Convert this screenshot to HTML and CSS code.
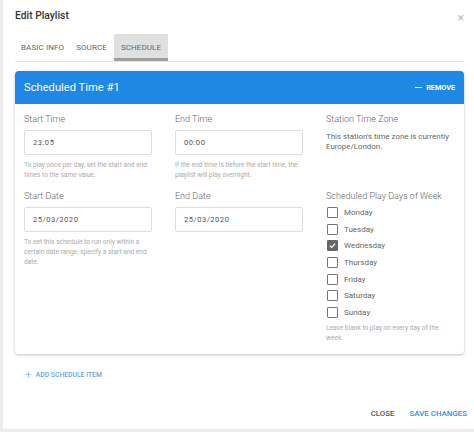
FILE: index.html
```html
<!DOCTYPE html>
<html lang="en">
<head>
    <meta charset="UTF-8">
    <meta name="viewport" content="width=device-width, initial-scale=1.0">
    <title>Edit Playlist</title>
    <link rel="stylesheet" href="styles.css">
</head>
<body>

<div class="dialog">
    <div class="dialog-head">
        <h1>Edit Playlist</h1>
        <button class="close-x" type="button">&times;</button>
    </div>

    <nav class="tabs">
        <a class="tab">BASIC INFO</a>
        <a class="tab">SOURCE</a>
        <a class="tab active">SCHEDULE</a>
    </nav>

    <section class="card">
        <div class="card-head">
            <h2>Scheduled Time #1</h2>
            <button class="remove-btn" type="button"><span class="dash"></span>REMOVE</button>
        </div>

        <div class="card-body">
            <div class="field">
                <label for="start_time">Start Time</label>
                <input type="text" id="start_time" value="23:05">
                <p class="help">To play once per day, set the start and end times to the same value.</p>
            </div>

            <div class="field">
                <label for="end_time">End Time</label>
                <input type="text" id="end_time" value="00:00">
                <p class="help">If the end time is before the start time, the playlist will play overnight.</p>
            </div>

            <div class="field">
                <label>Station Time Zone</label>
                <p class="info">This station's time zone is currently Europe/London.</p>
            </div>

            <div class="field">
                <label for="start_date">Start Date</label>
                <input type="text" id="start_date" value="25/03/2020">
                <p class="help">To set this schedule to run only within a certain date range, specify a start and end date.</p>
            </div>

            <div class="field">
                <label for="end_date">End Date</label>
                <input type="text" id="end_date" value="25/03/2020">
            </div>

            <div class="field">
                <label>Scheduled Play Days of Week</label>
                <ul class="days">
                    <li><span class="box"></span>Monday</li>
                    <li><span class="box"></span>Tuesday</li>
                    <li><span class="box checked"><svg viewBox="0 0 10 10"><path d="M2 5.2 L4.1 7.2 L8 2.9" fill="none" stroke="#fff" stroke-width="1.3"/></svg></span>Wednesday</li>
                    <li><span class="box"></span>Thursday</li>
                    <li><span class="box"></span>Friday</li>
                    <li><span class="box"></span>Saturday</li>
                    <li><span class="box"></span>Sunday</li>
                </ul>
                <p class="help">Leave blank to play on every day of the week.</p>
            </div>
        </div>
    </section>

    <button class="add-btn" type="button"><span class="plus">+</span>ADD SCHEDULE ITEM</button>

    <div class="dialog-foot">
        <button class="text-btn" type="button">CLOSE</button>
        <button class="text-btn primary" type="button">SAVE CHANGES</button>
    </div>
</div>

</body>
</html>
```

FILE: styles.css
```css
body {
    font-family: Roboto, "Liberation Sans", sans-serif;
    background-color: #ececec;
    color: #333;
    margin: 0;
    padding: 0;
}

button {
    font-family: inherit;
    background: none;
    border: none;
    padding: 0;
    cursor: pointer;
}

.dialog {
    background-color: white;
    margin-left: 3px;
    width: 471px;
    height: 429px;
    position: relative;
}

.dialog-head {
    display: flex;
    justify-content: space-between;
    align-items: center;
    padding: 7px 10px 0 12px;
    height: 17px;
}

.dialog-head h1 {
    font-size: 10.3px;
    font-weight: 500;
    margin: 0;
    color: #333;
}

.close-x {
    color: #bbb;
    font-size: 12px;
    line-height: 12px;
    margin-top: 4px;
}

.tabs {
    display: flex;
    margin: 10px 10px 0 12px;
    border-bottom: 1px solid #e6e6e6;
    height: 27px;
}

.tab {
    display: flex;
    align-items: center;
    padding: 0 6px;
    font-size: 8px;
    color: #666;
    letter-spacing: 0.1px;
    box-sizing: border-box;
    height: 27px;
}

.tab.active {
    background-color: #e0e0e0;
    border-bottom: 3px solid #9e9e9e;
    padding: 3px 7px 0;
    margin-left: 1px;
}

.card {
    margin: 9px 10px 0 12px;
    border-radius: 4px;
    box-shadow: 0 1px 3px rgba(0, 0, 0, 0.25);
    overflow: hidden;
}

.card-head {
    background-color: #1f88e5;
    height: 33px;
    display: flex;
    align-items: center;
    justify-content: space-between;
    padding: 0 9px;
}

.card-head h2 {
    margin: 0;
    font-size: 11.2px;
    font-weight: 400;
    color: white;
}

.remove-btn {
    color: white;
    font-size: 7.4px;
    font-weight: 700;
    display: flex;
    align-items: center;
    letter-spacing: -0.1px;
}

.dash {
    display: inline-block;
    width: 7px;
    height: 1.5px;
    background-color: white;
    margin-right: 4px;
}

.card-body {
    display: grid;
    grid-template-columns: 128px 128px 128px;
    column-gap: 23px;
    row-gap: 9px;
    align-items: start;
    padding: 8px 9px 10px;
}

.field label {
    display: block;
    font-size: 9px;
    font-weight: 300;
    line-height: 14px;
    color: #666;
}

.field input {
    display: block;
    box-sizing: border-box;
    width: 100%;
    height: 25px;
    margin-top: 4px;
    border: 1px solid #ddd;
    border-radius: 2px;
    padding: 0 8px;
    font-family: Roboto, sans-serif;
    font-size: 7.6px;
    letter-spacing: 0.5px;
    color: #555;
    outline: none;
}

.help {
    margin: 5px 0 0;
    font-size: 6.6px;
    line-height: 10px;
    color: #aaa;
}

.info {
    margin: 6px 0 0;
    font-size: 7.9px;
    line-height: 10px;
    color: #666;
}

.days {
    list-style: none;
    margin: 1px 0 0;
    padding: 0;
}

.days li {
    display: flex;
    align-items: center;
    height: 16.7px;
    font-size: 8px;
    color: #666;
}

.box {
    box-sizing: border-box;
    width: 11px;
    height: 11px;
    border: 1px solid #777;
    border-radius: 1px;
    margin: 0 6px 0 1px;
    display: flex;
}

.box.checked {
    background-color: #666;
    border-color: #666;
}

.box svg {
    width: 100%;
    height: 100%;
}

.days + .help {
    margin-top: 2px;
    line-height: 10.5px;
}

.add-btn {
    display: flex;
    align-items: center;
    margin: 16px 0 0 22px;
    font-size: 6.8px;
    font-weight: 500;
    color: #64a6e6;
}

.plus {
    font-size: 12px;
    font-weight: 300;
    margin-right: 4px;
    line-height: 10px;
}

.dialog-foot {
    position: absolute;
    right: 7px;
    bottom: 11px;
    display: flex;
    gap: 15px;
}

.text-btn {
    font-size: 7.9px;
    font-weight: 500;
    color: #555;
}

.text-btn.primary {
    color: #2e8fe6;
}
```
